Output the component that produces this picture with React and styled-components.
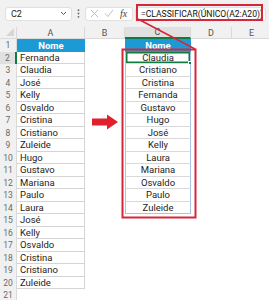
import React from 'react';
import styled, { createGlobalStyle, css } from 'styled-components';

const FONT = `"Liberation Sans Narrow", "Roboto", "Liberation Sans", sans-serif`;

const Global = createGlobalStyle`
  html, body { margin: 0; padding: 0; background: #fff; }
  body { font-family: ${FONT}; }
`;

const Page = styled.div`
  position: relative;
  width: 269px;
  height: 300px;
  overflow: hidden;
  display: flex;
  flex-direction: column;
  background: #fff;
`;

const TopBar = styled.div`
  height: 27px;
  flex: none;
  box-sizing: border-box;
  background: #f1f1f1;
  display: flex;
  align-items: center;
  padding-left: 5px;
`;

const Field = styled.div`
  box-sizing: border-box;
  height: 14px;
  background: #fff;
  border: 1px solid #e0e0e0;
  border-radius: 3px;
  display: flex;
  align-items: center;
  color: #222;
  font-size: 9px;
`;

const NameBox = styled(Field)`
  width: 67px;
  padding: 0 4px 0 5px;
  justify-content: space-between;
`;

const Dots = styled.div`
  width: 13px;
  display: flex;
  justify-content: center;
`;

const FxBox = styled(Field)`
  width: 48px;
  padding-left: 4px;
  gap: 5px;
  color: #b5b5b5;
`;

const FxLabel = styled.span`
  font-family: "Liberation Serif", serif;
  font-style: italic;
  font-size: 10px;
  color: #444;
  margin-left: 1px;
`;

const FormulaField = styled(Field)`
  width: 131px;
  margin-left: 2px;
  padding-left: 5px;
  font-size: 8.6px;
  color: #111;
  white-space: nowrap;
`;

const Sheet = styled.div`
  display: grid;
  grid-template-columns: 17px 68px 40px 66px 41px 40px;
  grid-template-rows: 12px repeat(21, 12.5px);
  font-size: 9.5px;
  color: #1d1d1d;
`;

const Corner = styled.div`
  background: #f1f1f1;
  border-right: 1px solid #dadada;
  border-bottom: 1px solid #dadada;
  box-sizing: border-box;
  position: relative;
  overflow: hidden;
  &::after {
    content: '';
    position: absolute;
    right: 2px;
    bottom: 2px;
    width: 0;
    height: 0;
    border-left: 8px solid transparent;
    border-bottom: 8px solid #d6d6d6;
  }
`;

const ColHead = styled.div`
  box-sizing: border-box;
  background: ${(p) => (p.$active ? '#e0e0e0' : '#f1f1f1')};
  border-right: 1px solid #dadada;
  border-bottom: ${(p) => (p.$active ? '2px solid #107c41' : '1px solid #dadada')};
  display: flex;
  align-items: center;
  justify-content: center;
  color: #555;
  font-size: 9px;
`;

const RowHead = styled.div`
  box-sizing: border-box;
  background: ${(p) => (p.$active ? '#e0e0e0' : '#f1f1f1')};
  border-right: ${(p) => (p.$active ? '2px solid #107c41' : '1px solid #dadada')};
  display: flex;
  align-items: center;
  justify-content: center;
  color: #6a6a6a;
  font-size: 8.5px;
`;

const Cell = styled.div`
  box-sizing: border-box;
  position: relative;
  display: flex;
  align-items: center;
  white-space: nowrap;
  overflow: visible;
  ${(p) =>
    p.$kind === 'head' &&
    css`
      background: #1c9ad6;
      color: #fff;
      font-weight: bold;
      justify-content: center;
    `}
  ${(p) =>
    p.$kind === 'list' &&
    css`
      padding-left: 3px;
      border-right: 1px solid #d4d4d4;
      border-bottom: 1px solid #d4d4d4;
    `}
  ${(p) =>
    p.$kind === 'sorted' &&
    css`
      justify-content: center;
      border-left: 1px solid #a8c4e4;
      border-right: 1px solid #a8c4e4;
      border-bottom: 1px solid ${p.$last ? '#a8c4e4' : '#d9d9d9'};
    `}
  ${(p) =>
    p.$selected &&
    css`
      box-shadow: inset 0 0 0 1.5px #107c41;
    `}
`;

const Handle = styled.span`
  position: absolute;
  right: -2px;
  bottom: -2px;
  width: 4px;
  height: 4px;
  background: #107c41;
  border: 1px solid #fff;
  box-sizing: border-box;
`;

const Overlay = styled.svg`
  position: absolute;
  left: 0;
  top: 0;
  width: 269px;
  height: 300px;
  pointer-events: none;
`;

const listA = [
  'Fernanda', 'Claudia', 'José', 'Kelly', 'Osvaldo', 'Cristina', 'Cristiano', 'Zuleide',
  'Hugo', 'Gustavo', 'Mariana', 'Paulo', 'Laura', 'José', 'Kelly', 'Osvaldo', 'Cristina',
  'Cristiano', 'Zuleide',
];

const listC = [
  'Claudia', 'Cristiano', 'Cristina', 'Fernanda', 'Gustavo', 'Hugo', 'José', 'Kelly',
  'Laura', 'Mariana', 'Osvaldo', 'Paulo', 'Zuleide',
];

const cols = ['A', 'B', 'C', 'D', 'E'];

function renderCell(row, col) {
  const key = `${col}${row}`;
  if (row === 1 && (col === 'A' || col === 'C')) {
    return <Cell key={key} $kind="head">Nome</Cell>;
  }
  if (col === 'A' && row >= 2 && row <= 20) {
    return <Cell key={key} $kind="list">{listA[row - 2]}</Cell>;
  }
  if (col === 'C' && row >= 2 && row <= 14) {
    return (
      <Cell key={key} $kind="sorted" $last={row === 14} $selected={row === 2}>
        {listC[row - 2]}
        {row === 2 && <Handle />}
      </Cell>
    );
  }
  return <Cell key={key} />;
}

export default function App() {
  const rows = Array.from({ length: 21 }, (_, i) => i + 1);
  return (
    <Page>
      <Global />
      <TopBar>
        <NameBox>
          <span>C2</span>
          <svg width="7" height="5" viewBox="0 0 7 5">
            <path d="M1 1 L3.5 3.5 L6 1" fill="none" stroke="#555" strokeWidth="1" />
          </svg>
        </NameBox>
        <Dots>
          <svg width="3" height="9" viewBox="0 0 3 9">
            <circle cx="1.5" cy="1.2" r="0.9" fill="#666" />
            <circle cx="1.5" cy="4.5" r="0.9" fill="#666" />
            <circle cx="1.5" cy="7.8" r="0.9" fill="#666" />
          </svg>
        </Dots>
        <FxBox>
          <svg width="9" height="9" viewBox="0 0 9 9">
            <path d="M1 1 L8 8 M8 1 L1 8" stroke="#bdbdbd" strokeWidth="1" fill="none" />
          </svg>
          <svg width="10" height="9" viewBox="0 0 10 9">
            <path d="M1 4.5 L3.8 7.5 L9 1" stroke="#bdbdbd" strokeWidth="1" fill="none" />
          </svg>
          <FxLabel>fx</FxLabel>
        </FxBox>
        <FormulaField>=CLASSIFICAR(ÚNICO(A2:A20))</FormulaField>
      </TopBar>
      <Sheet>
        <Corner />
        {cols.map((c) => (
          <ColHead key={c} $active={c === 'C'}>{c}</ColHead>
        ))}
        {rows.map((r) => (
          <React.Fragment key={r}>
            <RowHead $active={r === 2}>{r}</RowHead>
            {cols.map((c) => renderCell(r, c))}
          </React.Fragment>
        ))}
      </Sheet>
      <Overlay viewBox="0 0 269 300">
        <rect x="137" y="5" width="125" height="15" fill="none" stroke="#d6263a" strokeWidth="2" />
        <line x1="138" y1="19" x2="195" y2="49" stroke="#d6263a" strokeWidth="1.6" />
        <rect x="122.5" y="49.5" width="73" height="168" fill="none" stroke="#d6263a" strokeWidth="2" />
        <polygon points="92,118.5 107,118.5 107,114.5 118,122 107,129.5 107,125.5 92,125.5" fill="#e0202c" />
      </Overlay>
    </Page>
  );
}
